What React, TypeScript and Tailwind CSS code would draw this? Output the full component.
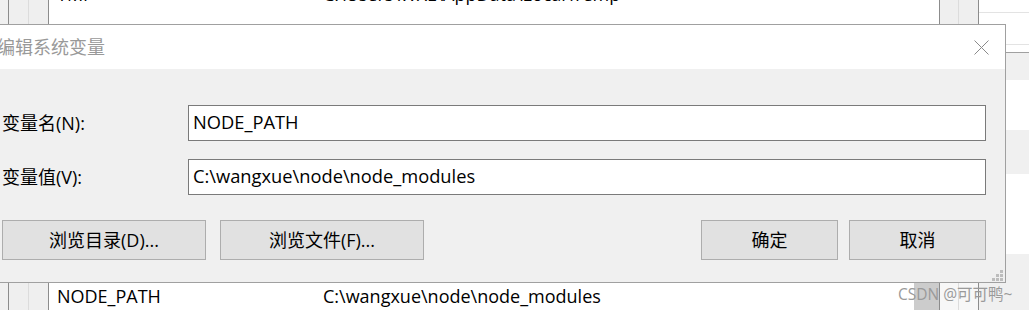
const font = "font-['Open_Sans','Noto_Sans_CJK_SC',sans-serif]"

// фон: окно со списком переменных за диалогом
function ListBackground() {
    return (
        <div className="flex h-[310px] w-[1029px]">
            <div className="w-[9px] border-r border-[#8c8c8c] bg-[#f0f0f0]" />
            <div className="flex w-[41px]">
                <div className="w-[20px] border-r border-[#dcdcdc] bg-[#efefef]" />
                <div className="w-[20px] border-r border-[#8c8c8c] bg-[#efefef]" />
            </div>
            <div className="flex flex-1 flex-col justify-between bg-white">
                <div className="-mt-[19px] flex h-[27px] items-center text-[18px] text-black">
                    <span className="w-[273px] pl-[7px]">TMP</span>
                    <span>C:\Users\WXL\AppData\Local\Temp</span>
                </div>
                <div className="flex h-[27px] items-center text-[18px] text-black">
                    <span className="w-[273px] pl-[7px]">NODE_PATH</span>
                    <span>C:\wangxue\node\node_modules</span>
                    <div className="ml-auto h-full w-[25px] bg-[#cccccc]" />
                </div>
            </div>
            <div className="flex w-[40px] border-x border-[#8c8c8c]">
                <div className="flex w-[19px] flex-col border-r border-[#dcdcdc]">
                    <div className="h-[24px] bg-[#efefef]" />
                    <div className="flex-1 bg-[#f7f7f7]" />
                </div>
                <div className="flex flex-1 flex-col">
                    <div className="h-[24px] bg-[#efefef]" />
                    <div className="flex-1 bg-[#f7f7f7]" />
                </div>
            </div>
            <div className="flex w-[50px] flex-col">
                <div className="h-[13px] border-b border-[#e3e3e3] bg-white" />
                <div className="h-[32px] border-b border-[#e3e3e3] bg-white" />
                <div className="h-[8px] border-b border-[#a0a0a0] bg-white" />
                <div className="h-[27px] bg-[#f0f0f0]" />
                <div className="h-[50px] bg-white" />
                <div className="h-[44px] bg-[#f0f0f0]" />
                <div className="h-[80px] bg-white" />
                <div className="flex-1 bg-[#f0f0f0]" />
            </div>
        </div>
    )
}

function Field({ label, value }: { label: string; value: string }) {
    return (
        <div className="flex items-center">
            <span className="w-[186px] text-[18px] text-black">{label}</span>
            <div className="flex h-[36px] flex-1 items-center border border-[#7a7a7a] bg-white px-[4px] pb-[3px] text-[18.3px] text-black">
                {value}
            </div>
        </div>
    )
}

function Button({ children, w }: { children: string; w: string }) {
    return (
        <button className={`flex h-[40px] ${w} items-center justify-center border border-[#adadad] bg-[#e1e1e1] text-[18px] text-black`}>
            {children}
        </button>
    )
}

export default function App() {
    return (
        <div className={`relative h-[310px] w-[1029px] overflow-hidden ${font}`}>
            <ListBackground />

            {/* диалог редактирования */}
            <div className="absolute left-[-12px] top-[24px] flex h-[259px] w-[1018px] flex-col border border-[#a0a0a0]">
                <div className="flex h-[44px] items-center justify-between bg-white pl-[8px] pr-[16px]">
                    <span className="text-[18px] text-[#999999]">编辑系统变量</span>
                    <svg width="15" height="15" viewBox="0 0 15 15">
                        <path d="M0.5 0.5L14.5 14.5M14.5 0.5L0.5 14.5" stroke="#8a8a8a" strokeWidth="1" />
                    </svg>
                </div>
                <div className="relative flex flex-1 flex-col bg-[#f0f0f0] pl-[13px] pr-[19px] pt-[36px]">
                    <div className="flex flex-col gap-[18px]">
                        <Field label="变量名(N):" value="NODE_PATH" />
                        <Field label="变量值(V):" value="C:\wangxue\node\node_modules" />
                    </div>
                    <div className="mt-[25px] flex items-center">
                        <Button w="w-[204px]">浏览目录(D)...</Button>
                        <div className="ml-[14px]">
                            <Button w="w-[204px]">浏览文件(F)...</Button>
                        </div>
                        <div className="ml-auto flex gap-[11px]">
                            <Button w="w-[137px]">确定</Button>
                            <Button w="w-[137px]">取消</Button>
                        </div>
                    </div>
                    <svg className="absolute bottom-[1px] right-[2px]" width="11" height="11" viewBox="0 0 11 11">
                        <rect x="8" y="0" width="3" height="3" fill="#bdbdbd" />
                        <rect x="4" y="4" width="3" height="3" fill="#bdbdbd" />
                        <rect x="8" y="4" width="3" height="3" fill="#bdbdbd" />
                        <rect x="0" y="8" width="3" height="3" fill="#bdbdbd" />
                        <rect x="4" y="8" width="3" height="3" fill="#bdbdbd" />
                        <rect x="8" y="8" width="3" height="3" fill="#bdbdbd" />
                    </svg>
                </div>
            </div>

            <span className="absolute left-[898px] top-[283px] text-[15.5px] text-[#9a9a9a]">CSDN @可可鸭~</span>
        </div>
    )
}
